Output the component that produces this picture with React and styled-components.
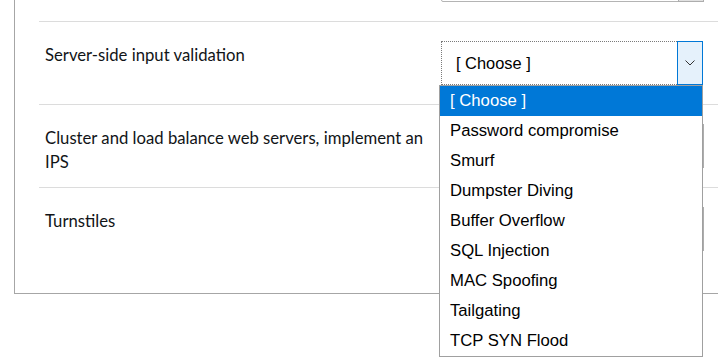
import React from 'react';
import styled, { createGlobalStyle } from 'styled-components';

const GlobalStyle = createGlobalStyle`
  html, body {
    margin: 0;
    padding: 0;
    background: #fff;
  }
`;

const Page = styled.div`
  width: 718px;
  height: 363px;
  overflow: hidden;
  background: #fff;
`;

const Panel = styled.div`
  width: 740px;
  margin: -61px 0 0 14px;
  padding: 0 0 23px 24px;
  border: 1px solid #a6a6a6;
  border-top: none;
  box-sizing: border-box;
`;

const Row = styled.div`
  display: flex;
  align-items: flex-start;
  border-top: ${(p) => (p.first ? 'none' : '1px solid #dcdcdc')};
  padding: 19px 0;
`;

const Label = styled.div`
  width: 385px;
  padding: 2px 11px 0 6px;
  margin-bottom: -10px;
  font-family: Lato, 'Liberation Sans', sans-serif;
  font-size: 16.7px;
  line-height: 24px;
  color: #111417;
`;

const SelectWrap = styled.div`
  position: relative;
  z-index: ${(p) => (p.open ? 2 : 1)};
`;

const SelectBox = styled.div`
  display: flex;
  align-items: stretch;
  width: ${(p) => (p.focused ? '262px' : '263px')};
  height: 44px;
  box-sizing: border-box;
  background: #fff;
  border: 1px ${(p) => (p.focused ? 'dotted #7a7a7a' : 'solid #b4b4b4')};
  border-radius: ${(p) => (p.focused ? '0' : '2px')};
  font-family: 'Liberation Sans', Arial, sans-serif;
  font-size: 16.4px;
  color: #000;
`;

const Value = styled.div`
  flex: 1;
  display: flex;
  align-items: center;
  padding-left: 14px;
`;

const Arrow = styled.div`
  width: 26px;
  margin: -1px -1px -1px 0;
  box-sizing: border-box;
  display: flex;
  align-items: center;
  justify-content: center;
  background: ${(p) => (p.focused ? '#e5f1fb' : '#e1e1e1')};
  border: 1px solid ${(p) => (p.focused ? '#0078d7' : '#adadad')};
`;

const List = styled.ul`
  position: absolute;
  top: 100%;
  left: -2px;
  width: 264px;
  margin: 0;
  padding: 0;
  list-style: none;
  box-sizing: border-box;
  background: #fff;
  border: 1px solid #a0a0a0;
  font-family: 'Liberation Sans', Arial, sans-serif;
  font-size: 16.7px;
`;

const Option = styled.li`
  height: 30px;
  line-height: 30px;
  padding-left: 10px;
  white-space: nowrap;
  background: ${(p) => (p.active ? '#0078d7' : '#fff')};
  color: ${(p) => (p.active ? '#fff' : '#000')};
`;

const options = [
  '[ Choose ]',
  'Password compromise',
  'Smurf',
  'Dumpster Diving',
  'Buffer Overflow',
  'SQL Injection',
  'MAC Spoofing',
  'Tailgating',
  'TCP SYN Flood',
];

const Chevron = () => (
  <svg width="10" height="6" viewBox="0 0 10 6">
    <polyline points="0.5,0.5 5,5 9.5,0.5" fill="none" stroke="#333" strokeWidth="1" />
  </svg>
);

const Select = ({ focused, open }) => (
  <SelectWrap open={open}>
    <SelectBox focused={focused}>
      <Value>{focused ? '[ Choose ]' : ''}</Value>
      <Arrow focused={focused}>{focused && <Chevron />}</Arrow>
    </SelectBox>
    {open && (
      <List>
        {options.map((o, i) => (
          <Option key={o} active={i === 0}>
            {o}
          </Option>
        ))}
      </List>
    )}
  </SelectWrap>
);

const rows = [
  { label: '' },
  { label: 'Server-side input validation', open: true },
  { label: 'Cluster and load balance web servers, implement an IPS' },
  { label: 'Turnstiles' },
];

const App = () => (
  <Page>
    <GlobalStyle />
    <Panel>
      {rows.map((r, i) => (
        <Row key={i} first={i === 0}>
          <Label>{r.label}</Label>
          <Select focused={r.open} open={r.open} />
        </Row>
      ))}
    </Panel>
  </Page>
);

export default App;
